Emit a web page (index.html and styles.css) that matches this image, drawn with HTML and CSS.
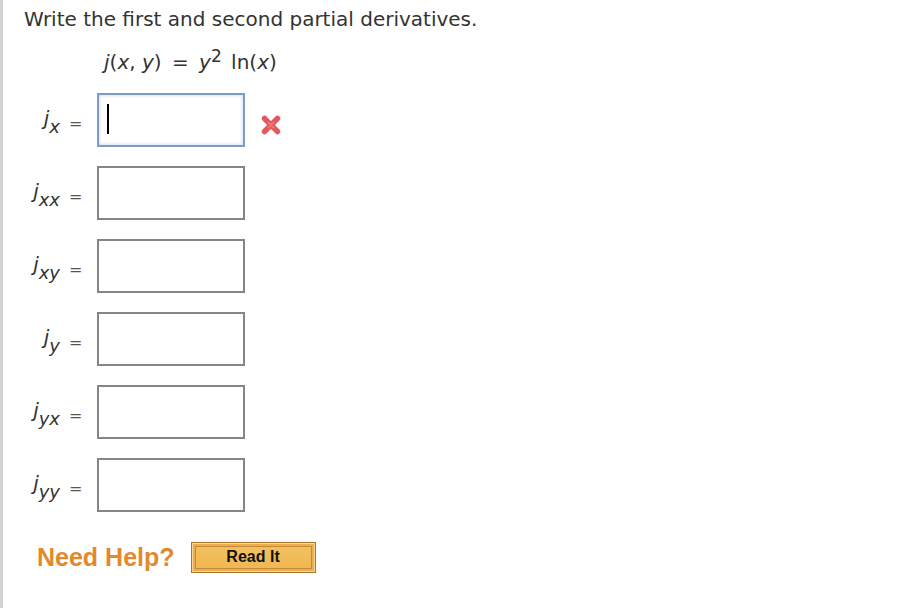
FILE: index.html
```html
<!DOCTYPE html>
<html>
<head>
<meta charset="utf-8">
<link rel="stylesheet" href="styles.css">
</head>
<body>
<div class="page">
  <p class="prompt">Write the first and second partial derivatives.</p>
  <p class="formula"><i>j</i>(<i>x</i>, <i>y</i>) <span class="op">=</span> <i>y</i><sup>2</sup> <span class="fn">ln</span>(<i>x</i>)</p>
  <div class="rows">
    <div class="row">
      <span class="lbl"><i>j</i><sub><i>x</i></sub></span><span class="eq">=</span>
      <span class="field focused"><input type="text" class="box"></span>
      <svg class="wrong" width="22" height="22" viewBox="0 0 22 22"><path d="M4.5 4.5 L17.5 17.5 M17.5 4.5 L4.5 17.5" stroke="#e2585b" stroke-width="5.5" stroke-linecap="round"/><path d="M8.5 8.5 L13.5 13.5 M13.5 8.5 L8.5 13.5" stroke="#ee7576" stroke-width="2" stroke-linecap="round"/></svg>
    </div>
    <div class="row">
      <span class="lbl"><i>j</i><sub><i>xx</i></sub></span><span class="eq">=</span>
      <span class="field"><input type="text" class="box"></span>
    </div>
    <div class="row">
      <span class="lbl"><i>j</i><sub><i>xy</i></sub></span><span class="eq">=</span>
      <span class="field"><input type="text" class="box"></span>
    </div>
    <div class="row">
      <span class="lbl"><i>j</i><sub><i>y</i></sub></span><span class="eq">=</span>
      <span class="field"><input type="text" class="box"></span>
    </div>
    <div class="row">
      <span class="lbl"><i>j</i><sub><i>yx</i></sub></span><span class="eq">=</span>
      <span class="field"><input type="text" class="box"></span>
    </div>
    <div class="row">
      <span class="lbl"><i>j</i><sub><i>yy</i></sub></span><span class="eq">=</span>
      <span class="field"><input type="text" class="box"></span>
    </div>
  </div>
  <div class="help">
    <span class="need">Need Help?</span>
    <button class="read">Read It</button>
  </div>
</div>
</body>
</html>
```
FILE: styles.css
```css
html, body {
  margin: 0;
  padding: 0;
  height: 100%;
  background: #fff;
}
body {
  border-left: 3px solid #d3d3d3;
  box-sizing: border-box;
  font-family: "DejaVu Sans", Verdana, sans-serif;
  color: #333;
}
.page {
  padding: 6px 0 0 21px;
}
.prompt {
  margin: 0;
  font-size: 20px;
  line-height: 26px;
}
.formula {
  margin: 17px 0 0 80px;
  font-size: 20px;
  line-height: 26px;
}
.formula .op {
  margin: 0 4px;
}
.formula .fn {
  margin-left: 3px;
}
.formula sup {
  font-size: 17px;
  line-height: 0;
  vertical-align: 7px;
}
.rows {
  margin-top: 18px;
  display: flex;
  flex-direction: column;
  gap: 19px;
}
.row {
  display: flex;
  align-items: center;
  height: 54px;
}
.lbl {
  width: 36px;
  text-align: right;
  font-size: 20px;
  white-space: nowrap;
  margin-bottom: 4px;
}
.lbl sub {
  font-size: 18px;
  line-height: 0;
  vertical-align: -8px;
}
.eq {
  width: 37px;
  padding-left: 9px;
  box-sizing: border-box;
  font-size: 16px;
  color: #555;
  margin-top: 6px;
}
.field {
  position: relative;
  display: block;
}
.box {
  display: block;
  width: 148px;
  height: 54px;
  box-sizing: border-box;
  border: 2px solid #858585;
  background: #fff;
  margin: 0;
  padding: 0 8px;
  outline: none;
  font-size: 18px;
}
.focused .box {
  border-color: #7e9dc5;
  box-shadow: inset 0 0 3px 1px #d5e3f6;
}
.focused::after {
  content: "";
  position: absolute;
  left: 10px;
  top: 11px;
  width: 2px;
  height: 30px;
  background: #000;
}
.wrong {
  margin-left: 15px;
  margin-top: 10px;
}
.help {
  margin-top: 30px;
  display: flex;
  align-items: center;
  padding-left: 13px;
}
.need {
  font-family: "Liberation Sans", Arial, sans-serif;
  font-weight: bold;
  font-size: 25px;
  color: #e2892e;
}
.read {
  margin-left: 16px;
  width: 125px;
  height: 31px;
  box-sizing: border-box;
  border: 1px solid #a8752f;
  padding: 0 0 1px;
  font-family: "Liberation Sans", Arial, sans-serif;
  font-weight: bold;
  font-size: 16px;
  color: #111;
  background: linear-gradient(#f3c262, #efb64f);
  box-shadow: inset 0 0 0 1px #f8d698, inset 0 0 0 3px #eeae4a, inset 0 0 0 4px #c4883c;
}
```
